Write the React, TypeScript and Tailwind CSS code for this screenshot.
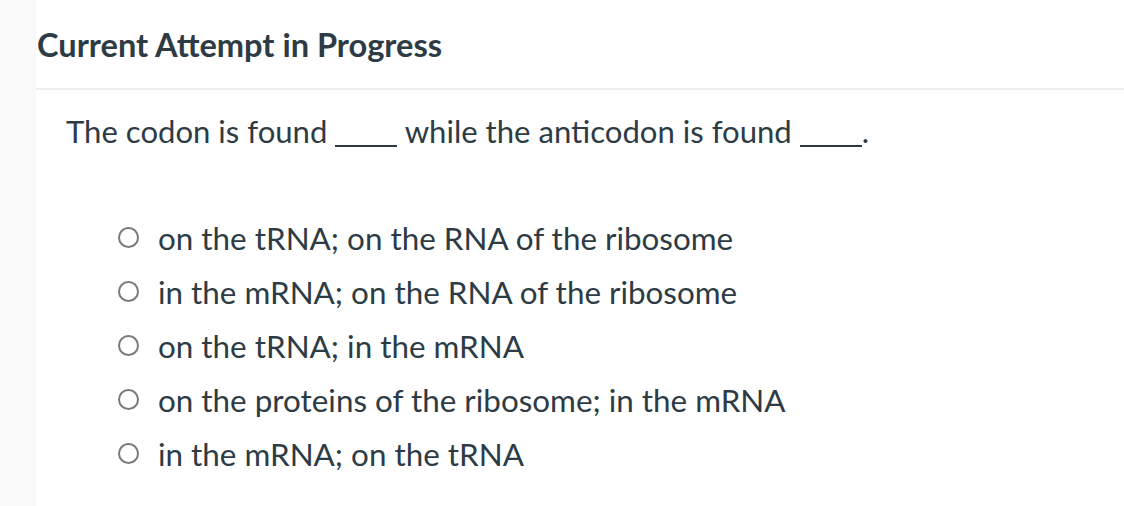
import React from "react";

const options = [
  "on the tRNA; on the RNA of the ribosome",
  "in the mRNA; on the RNA of the ribosome",
  "on the tRNA; in the mRNA",
  "on the proteins of the ribosome; in the mRNA",
  "in the mRNA; on the tRNA",
];

function Blank() {
  return <span className="inline-block w-[62px] h-0 border-b-[2px] border-[#2d3b45] align-[-4px]" />;
}

export default function App() {
  return (
    <div className="flex min-h-[506px] w-[1124px] bg-white text-[#2d3b45] font-['Lato',sans-serif] overflow-hidden">
      <div className="w-[36px] shrink-0 bg-[#f9f9f9]" />
      <div className="flex-1">
        <div className="pt-[27px] pb-[25px] pl-[1px] text-[32.6px] leading-[36px] font-bold">
          Current Attempt in Progress
        </div>
        <div className="h-[2px] bg-[#eeeeee]" />
        <div className="pl-[30px] pt-[23px] text-[31.1px] leading-[36px] whitespace-nowrap">
          The codon is found <Blank /> while the anticodon is found <Blank />.
        </div>
        <div className="mt-[62px] pl-[82px] flex flex-col">
          {options.map((o) => (
            <label key={o} className="flex items-center h-[54px] text-[31.4px] leading-[36px]">
              <span className="w-[21px] h-[21px] rounded-full border-2 border-[#7a7a7a] mr-[19px] shrink-0 relative top-[-1px]" />
              <span>{o}</span>
            </label>
          ))}
        </div>
      </div>
    </div>
  );
}
